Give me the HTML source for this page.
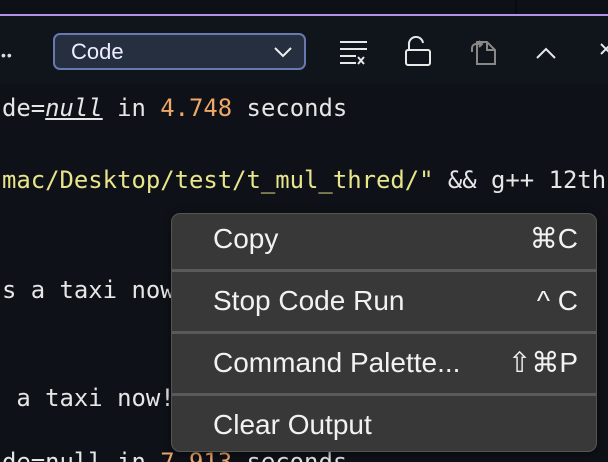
<!DOCTYPE html>
<html style="overflow:hidden"><head><meta charset="utf-8"><style>
html,body{margin:0;width:608px;height:462px;overflow:hidden}
body{background:#0e1117;position:relative;font-family:"Liberation Sans",sans-serif}
.top{position:absolute;left:0;top:0;width:608px;height:15px;background:#0d1117}
.vd{position:absolute;left:515px;top:0;width:2px;height:15px;background:#070a0e}
.pl{position:absolute;left:0;top:14px;width:608px;height:2px;background:#b392e8}
.tb{position:absolute;left:0;top:16px;width:608px;height:68px;background:#10141b}
.mono{position:absolute;font-family:"DejaVu Sans Mono","Liberation Mono",monospace;font-size:23.9px;color:#e6e6e6;white-space:pre;line-height:28px}
.dd{position:absolute;left:53px;top:33px;width:249px;height:33px;border:2px solid #6a78b0;border-radius:7px;background:#252f3f;color:#eef;font-size:22px}
.menu{position:absolute;left:171px;top:213px;width:424px;height:237px;background:#383838;border:1px solid #555;border-radius:9px;box-shadow:0 2px 8px rgba(0,0,0,.5);color:#f2f2f2;font-size:28px}
.it{position:absolute;left:41px;right:18px;height:32px;line-height:32px}
.it span{position:absolute;right:0}
.sep{position:absolute;left:0;right:0;height:3px;background:#5a5a5a}
</style></head><body>
<div class="top"></div><div class="vd"></div><div class="pl"></div>
<div class="tb"></div>
<div style="position:absolute;left:1px;top:47px;color:#ddd;font-size:14px;letter-spacing:1px">••</div>
<div class="dd"><span style="position:absolute;left:16px;top:4px">Code</span>
<svg style="position:absolute;left:218px;top:11px" width="20" height="12" viewBox="0 0 20 12"><path d="M2 2l8 8 8-8" stroke="#eee" stroke-width="2" fill="none"/></svg></div>
<svg style="position:absolute;left:330px;top:36px" width="278" height="34" viewBox="330 36 278 34">
<g stroke="#e8e8e8" stroke-width="2" fill="none">
<path d="M340 42h27M340 49h27M340 56h16M340 63h16"/><path d="M358 57l6 7M364 57l-6 7"/>
<rect x="406" y="50" width="24" height="15" rx="2"/><path d="M409 50v-5a7 7 0 0 1 14 -2"/>
<path d="M477 64V42h10l8 8v14z" stroke="#888"/><path d="M487 42v8h8" stroke="#888"/><path d="M472 52v-4a4 4 0 0 1 4-4h6m-3-3l3 3-3 3" stroke="#888"/>
<path d="M537 58l9-9 9 9"/><path d="M601 44l10 10M611 44l-10 10"/>
</g></svg>
<div class="mono" style="left:2px;top:94px">de=<i style="text-decoration:underline">null</i> in <span style="color:#f0a868">4.748</span> seconds</div>
<div class="mono" style="left:2px;top:166px;color:#e9e58a">mac/Desktop/test/t_mul_thred/" <span style="color:#e6e6e6">&amp;&amp; g++ 12th</span></div>
<div class="mono" style="left:2px;top:276px">s a taxi now</div>
<div class="mono" style="left:2px;top:384px"> a taxi now!</div>
<div class="mono" style="left:2px;top:448px">de=null in <span style="color:#f0a868">7.913</span> seconds</div>
<div class="menu">
<div class="it" style="top:9px">Copy<span>⌘C</span></div>
<div class="sep" style="top:55px"></div>
<div class="it" style="top:71px">Stop Code Run<span>^ C</span></div>
<div class="sep" style="top:117px"></div>
<div class="it" style="top:133px">Command Palette...<span>⇧⌘P</span></div>
<div class="sep" style="top:179px"></div>
<div class="it" style="top:195px">Clear Output</div>
</div>
</body></html>
